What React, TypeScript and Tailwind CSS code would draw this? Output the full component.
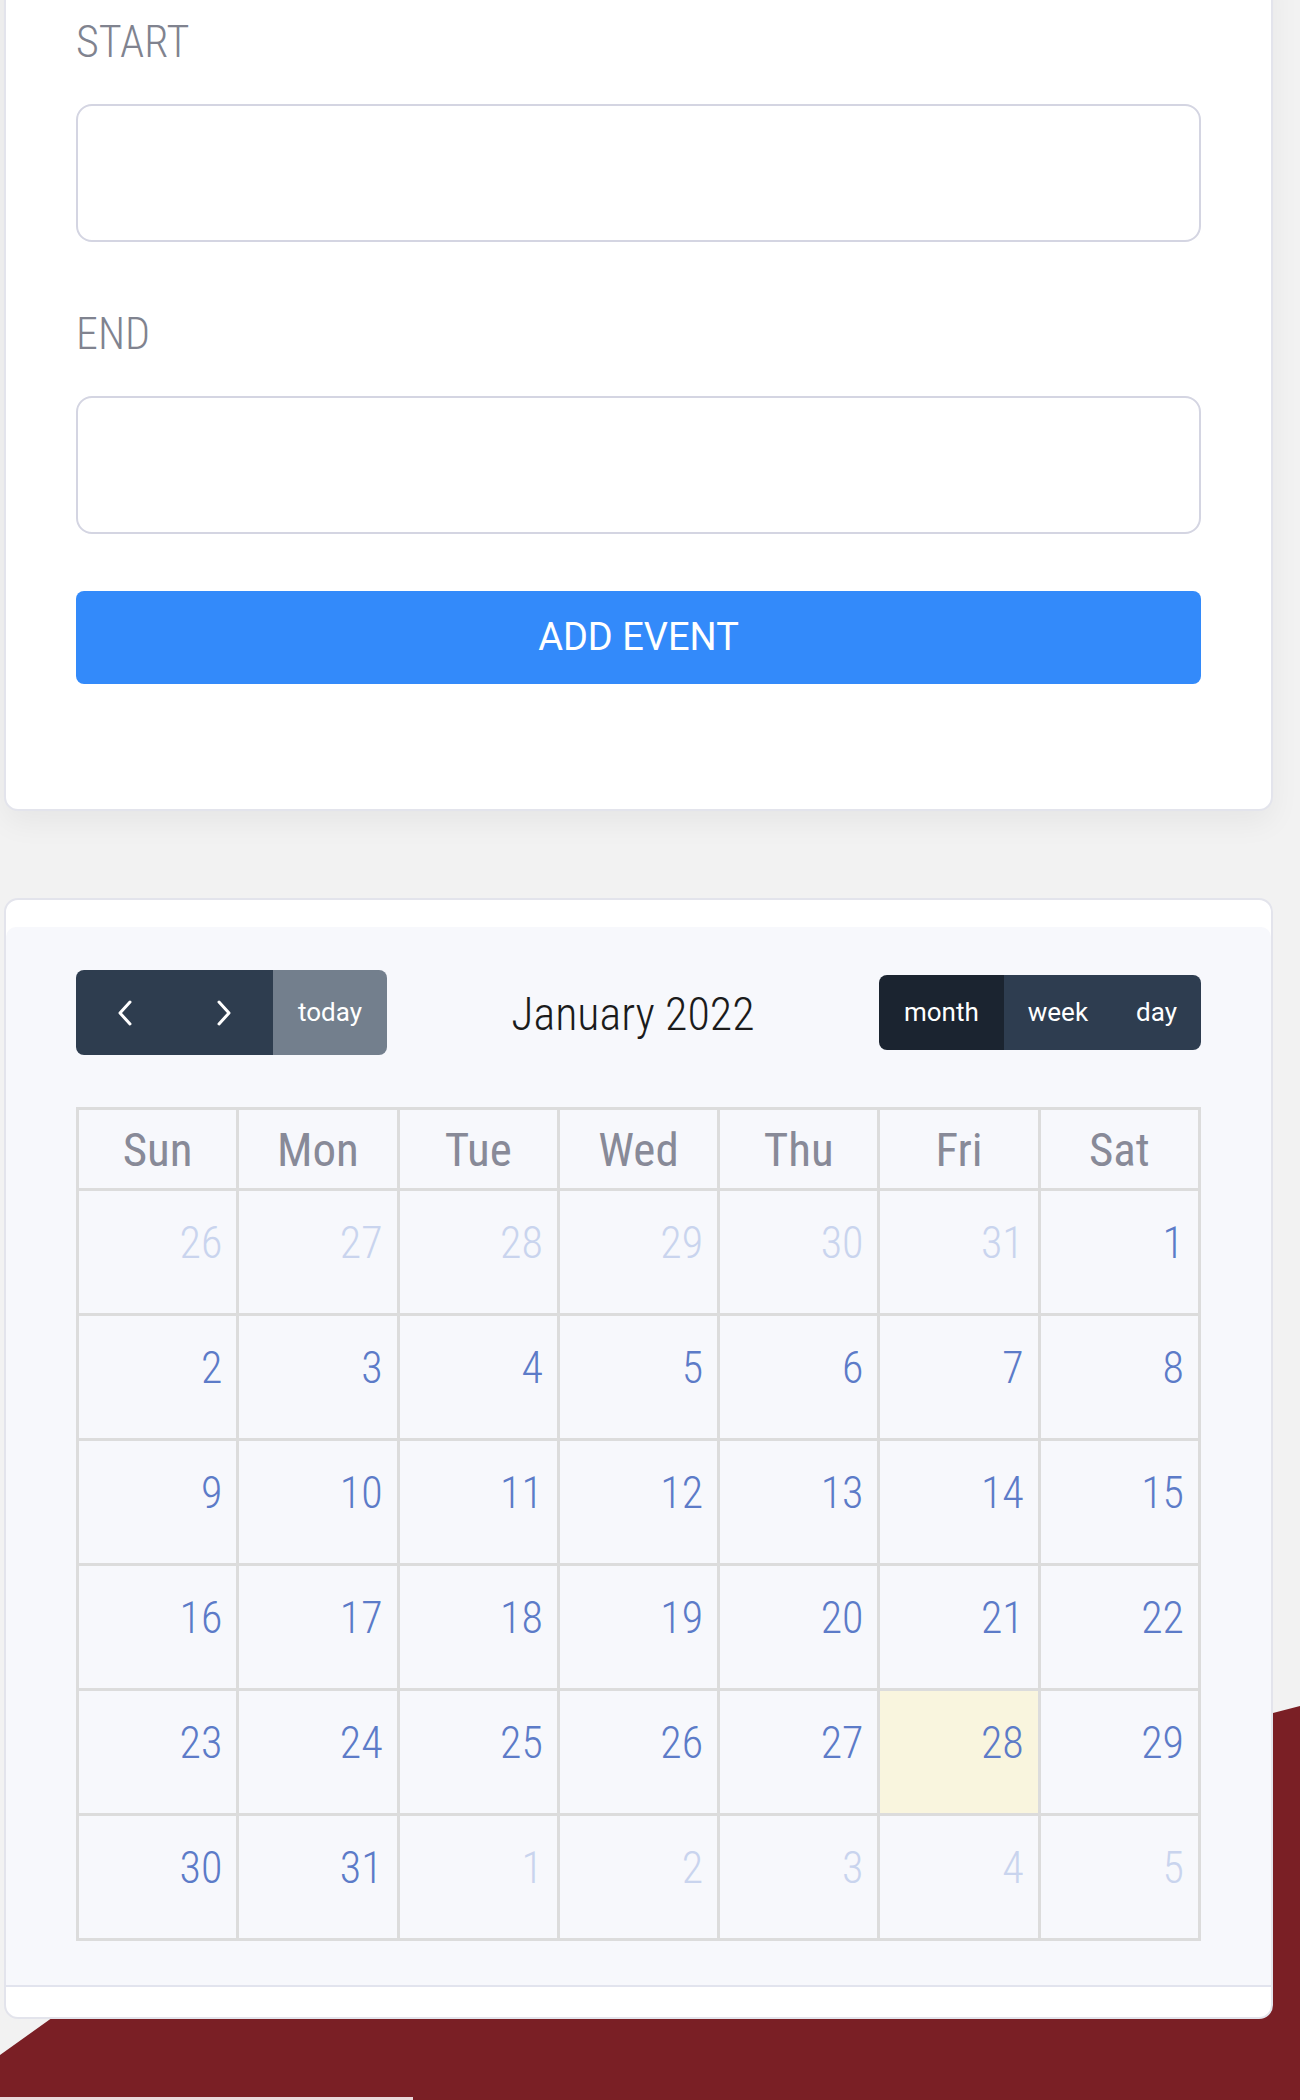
const weeks: { d: number; other?: boolean; today?: boolean }[][] = [
  [{ d: 26, other: true }, { d: 27, other: true }, { d: 28, other: true }, { d: 29, other: true }, { d: 30, other: true }, { d: 31, other: true }, { d: 1 }],
  [2, 3, 4, 5, 6, 7, 8].map((d) => ({ d })),
  [9, 10, 11, 12, 13, 14, 15].map((d) => ({ d })),
  [16, 17, 18, 19, 20, 21, 22].map((d) => ({ d })),
  [23, 24, 25, 26, 27, 28, 29].map((d) => ({ d, today: d === 28 })),
  [{ d: 30 }, { d: 31 }, { d: 1, other: true }, { d: 2, other: true }, { d: 3, other: true }, { d: 4, other: true }, { d: 5, other: true }],
];

const days = ["Sun", "Mon", "Tue", "Wed", "Thu", "Fri", "Sat"];

function Chevron({ dir }: { dir: "left" | "right" }) {
  return (
    <svg width="16" height="26" viewBox="0 0 16 26" fill="none">
      <polyline
        points={dir === "left" ? "13,2 3,13 13,24" : "3,2 13,13 3,24"}
        stroke="white"
        strokeWidth="3"
        strokeLinecap="round"
        strokeLinejoin="round"
      />
    </svg>
  );
}

function EventForm() {
  return (
    <div className="relative z-10 ml-[4px] w-[1269px] -mt-[40px] bg-white border-2 border-[#e3e4ec] rounded-[14px] px-[70px] pt-[50px] pb-[125px] shadow-[0_12px_30px_rgba(0,0,0,0.05)]">
      <label className="block h-[60px] leading-[60px] text-[44px] font-light text-[#80838f] font-['Roboto_Condensed','Liberation_Sans_Narrow',sans-serif]">
        START
      </label>
      <input className="block mt-[32px] w-full h-[138px] border-2 border-[#d4d5e2] rounded-[16px] bg-white outline-none" />
      <label className="block mt-[62px] h-[60px] leading-[60px] text-[44px] font-light text-[#80838f] font-['Roboto_Condensed','Liberation_Sans_Narrow',sans-serif]">
        END
      </label>
      <input className="block mt-[32px] w-full h-[138px] border-2 border-[#d4d5e2] rounded-[16px] bg-white outline-none" />
      <button className="mt-[57px] w-full h-[93px] rounded-[8px] bg-[#338afa] text-white text-[38px] font-['Roboto',sans-serif]">
        ADD EVENT
      </button>
    </div>
  );
}

function Calendar() {
  return (
    <div className="relative z-10 ml-[4px] mt-[87px] w-[1269px] bg-white border-2 border-[#e3e4ec] rounded-[14px] pt-[27px] pb-[30px]">
      <div className="bg-[#f7f8fc] rounded-t-[10px] border-b-2 border-[#e2e4ee] px-[70px] pt-[43px] pb-[44px]">
        <div className="flex h-[85px] items-center justify-between font-['Roboto',sans-serif] text-[26px] text-white">
          <div className="flex h-[85px] rounded-[8px] overflow-hidden">
            <button className="flex w-[98px] items-center justify-center bg-[#2e3d4f]">
              <Chevron dir="left" />
            </button>
            <button className="flex w-[99px] items-center justify-center bg-[#2e3d4f]">
              <Chevron dir="right" />
            </button>
            <button className="w-[114px] bg-[#737f8d]">today</button>
          </div>
          <h2 className="mt-[3px] text-[46px] font-light text-[#1b1b1b] font-['Roboto_Condensed','Liberation_Sans_Narrow',sans-serif]">
            January 2022
          </h2>
          <div className="flex h-[75px] rounded-[8px] overflow-hidden">
            <button className="px-[25px] bg-[#1b2430]">month</button>
            <button className="px-[24px] bg-[#2e3d50]">week</button>
            <button className="px-[24px] bg-[#2e3d50]">day</button>
          </div>
        </div>

        <div className="mt-[52px] grid grid-cols-7 gap-[3px] p-[3px] bg-[#dcdcdc] font-['Roboto_Condensed','Liberation_Sans_Narrow',sans-serif]">
          {days.map((day) => (
            <div key={day} className="flex h-[78px] items-center justify-center pt-[3px] bg-[#f7f8fc] text-[47px] text-[#888a98]">
              {day}
            </div>
          ))}
          {weeks.flat().map((cell, i) => (
            <div
              key={i}
              className={`h-[122px] pt-[30px] pr-[14px] text-right text-[44px] leading-none font-light ${
                cell.today ? "bg-[#f9f5de]" : "bg-[#f7f8fc]"
              } ${cell.other ? "text-[#c9d4ee]" : "text-[#5c7bc8]"}`}
            >
              {cell.d}
            </div>
          ))}
        </div>
      </div>
    </div>
  );
}

export default function App() {
  return (
    <main className="relative h-[2100px] w-[1300px] overflow-hidden bg-[#f2f2f2]">
      <svg className="absolute left-0 top-0" width="1300" height="2100" viewBox="0 0 1300 2100">
        <polygon points="70,2005 1273,1713 1300,1706 1300,2100 0,2100 0,2055" fill="#7a1f25" />
      </svg>
      <div className="absolute left-0 bottom-0 h-[3px] w-[413px] bg-[#ead8da]" />
      <EventForm />
      <Calendar />
    </main>
  );
}
